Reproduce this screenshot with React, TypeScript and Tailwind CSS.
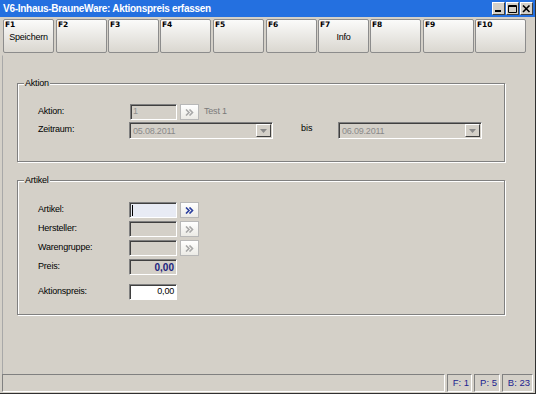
import React from "react";

const Chev = ({ on }: { on: boolean }) => (
  <svg width="9" height="7" viewBox="0 0 9 7">
    <path d="M1 0.5 L4 3.5 L1 6.5 M4.5 0.5 L7.5 3.5 L4.5 6.5" fill="none" stroke={on ? "#2b3f9e" : "#a8a8a8"} strokeWidth="1.6" />
  </svg>
);

const PickBtn = ({ on }: { on: boolean }) => (
  <div className="ml-[3px] flex h-[16px] w-[19px] items-center justify-center border border-[#b8b8b8] bg-gradient-to-b from-white to-[#ecebe6]">
    <Chev on={on} />
  </div>
);

const Sunken = ({ w, h = 16, bg, children, cls = "" }: { w: string; h?: number; bg: string; children?: React.ReactNode; cls?: string }) => (
  <div
    className={`${w} ${bg} ${cls} flex items-center border border-t-[#808080] border-l-[#808080] border-b-white border-r-white shadow-[inset_1px_1px_0_#404040]`}
    style={{ height: h }}
  >
    {children}
  </div>
);

const Combo = ({ text }: { text: string }) => (
  <div className="flex h-[17px] w-[144px] items-stretch border border-t-[#808080] border-l-[#808080] border-b-white border-r-white shadow-[inset_1px_1px_0_#404040] bg-[#d4d0c8]">
    <div className="flex-1 pl-[3px] pt-[2px] text-[9px] tracking-[-0.2px] leading-[12px] text-[#8a8a8a]">{text}</div>
    <div className="m-[1px] ml-0 flex w-[15px] items-center justify-center border border-t-white border-l-white border-b-[#404040] border-r-[#404040] bg-[#d4d0c8]">
      <svg width="7" height="4" viewBox="0 0 7 4"><path d="M0 0 H7 L3.5 4 Z" fill="#8a8a8a" /></svg>
    </div>
  </div>
);

const Group = ({ title, children, cls }: { title: string; children: React.ReactNode; cls: string }) => (
  <div className={`relative w-[488px] border border-[#808080] shadow-[inset_1px_1px_0_white,1px_1px_0_white] ${cls}`}>
    <span className="absolute -top-[7px] left-[6px] bg-[#d4d0c8] px-[1px] text-[9px] tracking-[-0.2px] leading-[12px] text-black">{title}</span>
    {children}
  </div>
);

const Label = ({ t }: { t: string }) => (
  <div className="w-[91px] text-[9px] tracking-[-0.2px] leading-[12px] text-black -mt-[3px]">{t}</div>
);

export default function App() {
  const keys = ["F1", "F2", "F3", "F4", "F5", "F6", "F7", "F8", "F9", "F10"];
  const margins = ["", "ml-[2px]", "ml-[1px]", "ml-[1px]", "ml-[2px]", "ml-[2px]", "ml-[1px]", "ml-[1px]", "ml-[2px]", "ml-[1px]"];
  const labels: Record<string, string> = { F1: "Speichern", F7: "Info" };
  return (
    <div className="relative flex h-[394px] w-[536px] flex-col overflow-hidden border-b border-r border-b-[#303030] border-r-[#303030] bg-[#d4d0c8] font-['Liberation_Sans',Arial,sans-serif]">
      {/* title bar */}
      <div className="flex h-[17px] items-center justify-between bg-[#2470e0] pl-[3px] pr-[2px]">
        <span className="text-[10px] font-bold leading-[17px] tracking-[-0.28px] text-white">V6-Inhaus-BrauneWare: Aktionspreis erfassen</span>
        <div className="flex gap-[1px]">
          {["min", "max", "close"].map((k) => (
            <div key={k} className="flex h-[13px] w-[13px] items-center justify-center border border-t-white border-l-white border-b-[#404040] border-r-[#404040] bg-[#d4d0c8]">
              <svg width="9" height="8" viewBox="0 0 9 8">
                {k === "min" && <rect x="1" y="5" width="6" height="2" fill="black" />}
                {k === "max" && <path d="M0.5 0.5 H8.5 V7.5 H0.5 Z M0.5 1.5 H8.5" fill="none" stroke="black" />}
                {k === "close" && <path d="M1 0.5 L7.5 7 M7.5 0.5 L1 7" stroke="black" strokeWidth="1.6" />}
              </svg>
            </div>
          ))}
        </div>
      </div>

      {/* function keys */}
      <div className="flex pl-[3px] pt-[2px]">
        {keys.map((k, i) => (
          <div
            key={k}
            className={`relative h-[34px] w-[51px] rounded-[2px] border border-[#8c8c8c] bg-gradient-to-b from-[#fbfbfa] to-[#dad7d0] ${margins[i]}`}
          >
            <span className="absolute left-[1px] top-[0px] font-['DejaVu_Sans',sans-serif] text-[7.5px] font-bold leading-[9px] text-black">{k}</span>
            {labels[k] && (
              <span className="absolute inset-x-0 top-[11px] text-center text-[9px] tracking-[-0.2px] leading-[12px] text-black">{labels[k]}</span>
            )}
          </div>
        ))}
      </div>

      {/* main */}
      <div className="mx-[2px] mt-[2px] flex-1 border-l border-t border-l-[#a8a8a8] border-t-[#d4d0c8] pl-[14px] pt-[27px]">
        <Group title="Aktion" cls="pb-[22px] pt-[20px] pl-[20px]">
          <div className="flex items-center">
            <Label t="Aktion:" />
            <Sunken w="w-[47px]" bg="bg-[#d4d0c8]" cls="ml-[1px]">
              <span className="pl-[2px] text-[9px] text-[#909090]">1</span>
            </Sunken>
            <PickBtn on={false} />
            <span className="ml-[5px] text-[9px] tracking-[-0.2px] text-[#7a7a7a] -mt-[1px]">Test 1</span>
          </div>
          <div className="mt-[2px] flex items-center">
            <Label t="Zeitraum:" />
            <Combo text="05.08.2011" />
            <span className="ml-[28px] w-[37px] text-[9px] text-black -mt-[3px]">bis</span>
            <Combo text="06.09.2011" />
          </div>
        </Group>

        <Group title="Artikel" cls="mt-[18px] pb-[14px] pt-[21px] pl-[20px]">
          <div className="flex items-center">
            <Label t="Artikel:" />
            <Sunken w="w-[48px]" bg="bg-[#e8ebf4]">
              <span className="ml-[2px] h-[11px] w-[1px] bg-black" />
            </Sunken>
            <PickBtn on={true} />
          </div>
          <div className="mt-[3px] flex items-center">
            <Label t="Hersteller:" />
            <Sunken w="w-[48px]" bg="bg-[#d4d0c8]" />
            <PickBtn on={false} />
          </div>
          <div className="mt-[3px] flex items-center">
            <Label t="Warengruppe:" />
            <Sunken w="w-[48px]" bg="bg-[#d4d0c8]" />
            <PickBtn on={false} />
          </div>
          <div className="mt-[3px] flex items-center">
            <Label t="Preis:" />
            <Sunken w="w-[48px]" bg="bg-[#d4d0c8]" cls="justify-end">
              <span className="pr-[2px] text-[10px] font-bold text-[#1a237e]">0,00</span>
            </Sunken>
          </div>
          <div className="mt-[9px] flex items-center">
            <Label t="Aktionspreis:" />
            <Sunken w="w-[48px]" bg="bg-white" cls="justify-end">
              <span className="pr-[2px] text-[9px] tracking-[-0.2px] text-black">0,00</span>
            </Sunken>
          </div>
        </Group>
      </div>

      {/* status bar */}
      <div className="mb-[1px] flex h-[18px] gap-[2px] px-[2px]">
        <div className="flex-1 border border-t-[#808080] border-l-[#808080] border-b-white border-r-white" />
        {[
          ["F: 1", "w-[25px]"],
          ["P: 5", "w-[26px]"],
          ["B: 23", "w-[31px]"],
        ].map(([t, w]) => (
          <div key={t} className={`${w} flex items-center justify-end border border-t-[#808080] border-l-[#808080] border-b-white border-r-white pr-[2px] text-[9.5px] text-[#1c2390]`}>
            {t}
          </div>
        ))}
      </div>
    </div>
  );
}
